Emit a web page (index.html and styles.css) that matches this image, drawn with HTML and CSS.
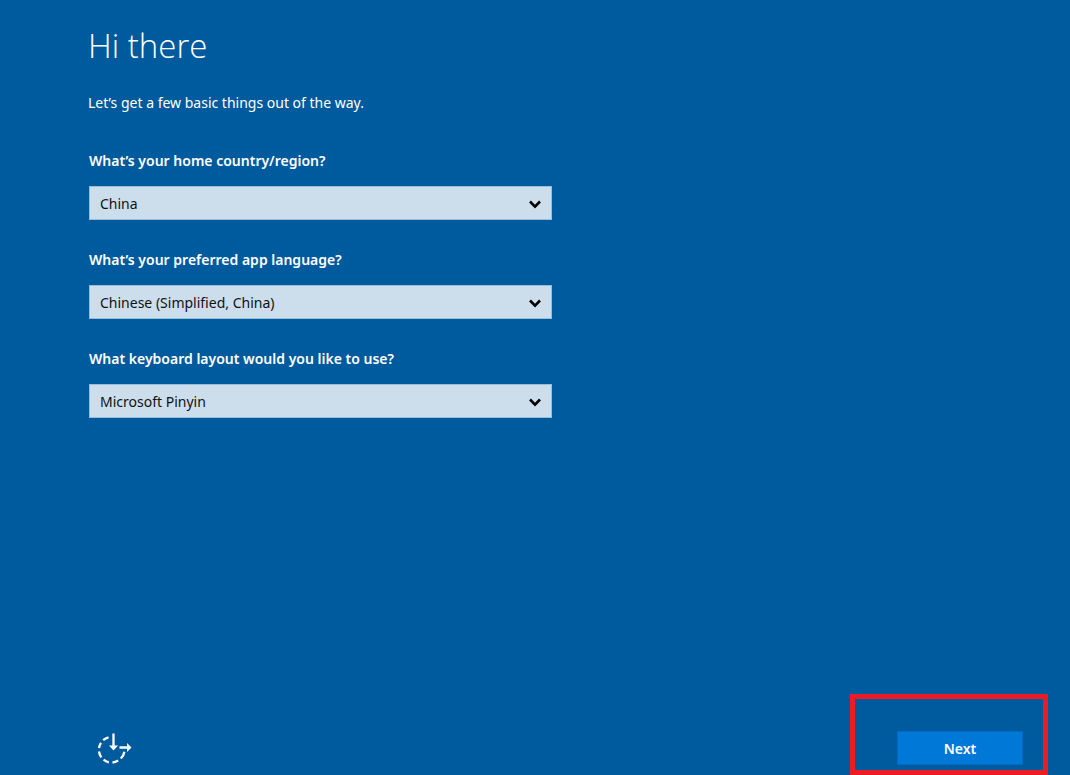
FILE: index.html
```html
<!DOCTYPE html>
<html lang="en">

<head>
    <meta charset="UTF-8">
    <title>Hi there</title>
    <link rel="stylesheet" href="styles.css">
</head>

<body>
    <main>
        <h1>Hi there</h1>
        <p class="intro">Let’s get a few basic things out of the way.</p>

        <form id="setup" class="setup">
            <div class="field">
                <label for="region">What’s your home country/region?</label>
                <div class="select">
                    <select id="region">
                        <option>China</option>
                    </select>
                    <svg class="chevron" viewBox="0 0 12 9"><path d="M1 1.5 L6 6.7 L11 1.5" /></svg>
                </div>
            </div>
            <div class="field">
                <label for="language">What’s your preferred app language?</label>
                <div class="select">
                    <select id="language">
                        <option>Chinese (Simplified, China)</option>
                    </select>
                    <svg class="chevron" viewBox="0 0 12 9"><path d="M1 1.5 L6 6.7 L11 1.5" /></svg>
                </div>
            </div>
            <div class="field">
                <label for="keyboard">What keyboard layout would you like to use?</label>
                <div class="select">
                    <select id="keyboard">
                        <option>Microsoft Pinyin</option>
                    </select>
                    <svg class="chevron" viewBox="0 0 12 9"><path d="M1 1.5 L6 6.7 L11 1.5" /></svg>
                </div>
            </div>
        </form>
    </main>

    <footer>
        <button type="button" class="ease" aria-label="Ease of access">
            <svg viewBox="0 0 36 32">
                <!-- dashed ring, open at the top right -->
                <path class="ring" d="M12.5 4.3 A13 13 0 0 0 7.2 7.2 M5 9.8 A13 13 0 0 0 3 15 M3 18.5 A13 13 0 0 0 5.3 24.3 M7.6 26.6 A13 13 0 0 0 12.8 29.3 M16.5 29.5 A13 13 0 0 0 22.2 27.6 M24.8 25.5 A13 13 0 0 0 28.4 18.7" />
                <path class="arrow" d="M17.5 0.5 V14 M23.5 14.5 H33" />
                <path class="head" d="M13 12.5 H22 L17.5 17.5 Z M31 10 L35.5 14.5 L31 19 Z" />
            </svg>
        </button>
        <!-- red frame marks the button to click -->
        <div class="highlight">
            <button type="submit" form="setup" class="next">Next</button>
        </div>
    </footer>
</body>

</html>
```
FILE: styles.css
```css
* {
    box-sizing: border-box;
}
body {
    margin: 0;
    min-height: 100vh;
    display: flex;
    flex-direction: column;
    justify-content: space-between;
    background-color: #005a9e;
    color: #fff;
    font-family: "Segoe UI", "Noto Sans", "Open Sans", sans-serif;
    font-size: 14px;
    line-height: 20px;
}
main {
    padding: 20px 88px 0;
}
h1 {
    margin: 0;
    font-family: "Segoe UI", "Open Sans", sans-serif;
    font-size: 33px;
    font-weight: 300;
    line-height: 52px;
}
.intro {
    margin: 21px 0 38px;
}
.setup {
    display: flex;
    flex-direction: column;
    gap: 30px;
    max-width: 465px;
    padding: 0 1px;
}
.field {
    display: flex;
    flex-direction: column;
    gap: 15px;
}
label {
    font-weight: 600;
}
.select {
    position: relative;
}
select {
    display: block;
    width: 100%;
    height: 34px;
    padding: 0 36px 0 10px;
    appearance: none;
    border: 1px solid #99bdd8;
    border-radius: 0;
    background-color: #ccdeec;
    color: #111;
    font-family: inherit;
    font-size: 14px;
}
.chevron {
    position: absolute;
    right: 11px;
    top: 14px;
    width: 12px;
    height: 9px;
    fill: none;
    stroke: #000;
    stroke-width: 2.6;
    pointer-events: none;
}
footer {
    display: flex;
    justify-content: space-between;
    align-items: flex-end;
    padding: 0 22px 0 96px;
}
.ease {
    width: 36px;
    height: 32px;
    margin-bottom: 10px;
    padding: 0;
    border: none;
    background: none;
}
.ease svg {
    display: block;
    width: 36px;
    height: 32px;
}
.ring,
.arrow {
    fill: none;
    stroke: #fff;
    stroke-width: 2.3;
}
.head {
    fill: #fff;
}
.highlight {
    padding: 32px 20px 5px 42px;
    border: 5px solid #ed1c24;
}
.next {
    display: block;
    width: 126px;
    height: 34px;
    border: 1px solid #006cc1;
    background-color: #0078d7;
    color: #fff;
    font-family: inherit;
    font-size: 14px;
    font-weight: 600;
}
```
